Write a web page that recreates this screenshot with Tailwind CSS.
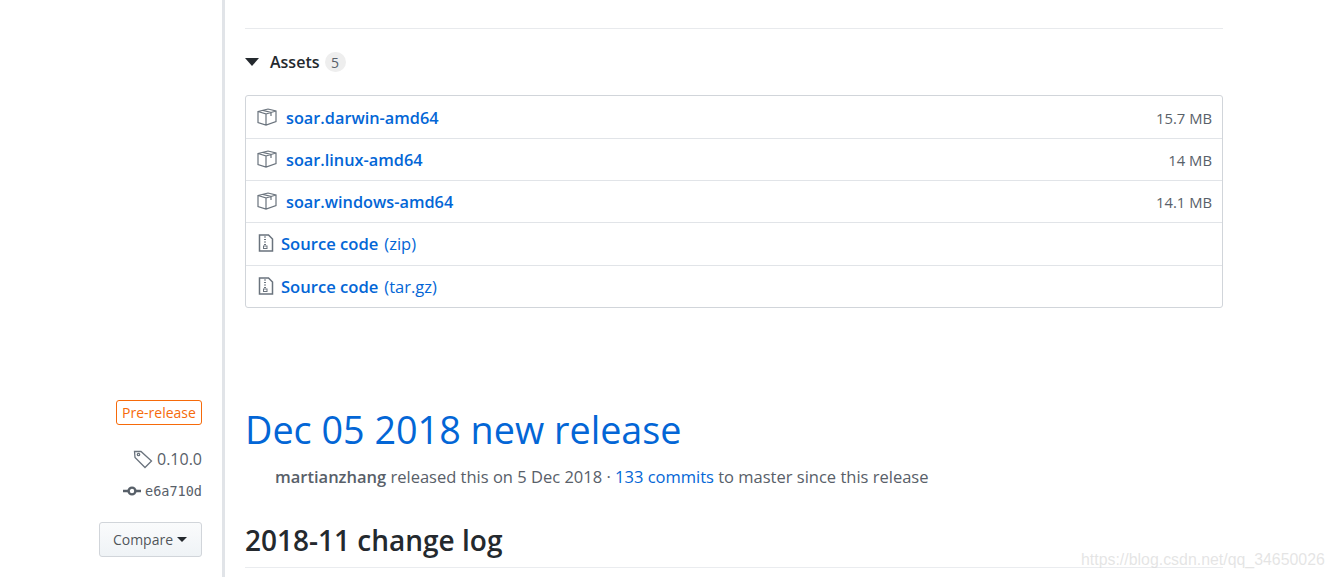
<!DOCTYPE html>
<html>
<head>
<meta charset="utf-8">
<script src="https://cdn.jsdelivr.net/npm/@tailwindcss/browser@4"></script>
</head>
<body class="bg-white">
<div class="relative flex h-[577px] w-[1334px] overflow-hidden bg-white font-['Open_Sans',sans-serif] text-[#24292e]">
  <aside class="flex h-full w-[225px] shrink-0 flex-col items-end border-r-[3px] border-[#e1e4e8] pt-[400px] pr-[20px]">
    <span class="flex h-[25px] w-[86px] items-center justify-center rounded-[3px] border border-[#f66a0a] text-[14px] text-[#f66a0a]">Pre-release</span>
    <div class="mt-[20px] flex h-[28px] items-center gap-[4px] text-[16px] text-[#586069]">
      <svg width="20" height="20" viewBox="0 0 20 20" fill="none" stroke="#6a737d" stroke-width="1.3"><path d="M1.5 2.5 H8 L18.5 12 L12 18.5 L2 8.5 Z"/><circle cx="5.5" cy="5.5" r="1.2"/></svg>
      <span>0.10.0</span>
    </div>
    <div class="mt-[8px] flex h-[20px] items-center gap-[4px] font-['DejaVu_Sans_Mono',monospace] text-[13.5px] text-[#586069]">
      <svg width="18" height="12" viewBox="0 0 18 12" fill="none" stroke="#586069" stroke-width="2.4"><circle cx="9" cy="6" r="3.4"/><path d="M0 6 H5 M13 6 H18"/></svg>
      <span>e6a710d</span>
    </div>
    <button class="mt-[21px] flex h-[35px] w-[103px] items-center justify-center gap-[4px] rounded-[3px] border border-[#d1d5da] bg-gradient-to-b from-[#fafbfc] to-[#eff3f6] pr-[1px] text-[14px] text-[#24292e]/80">
      <span>Compare</span><span class="h-0 w-0 border-x-[5px] border-t-[5px] border-x-transparent border-t-[#24292e]"></span>
    </button>
  </aside>
  <main class="ml-[20px] w-[978px] shrink-0 pt-[28px]">
    <div class="border-t border-[#e8eaed]"></div>
    <div class="mt-[20px] flex h-[26px] items-center">
      <span class="h-0 w-0 border-x-[7.5px] border-t-[8px] border-x-transparent border-t-[#24292e]"></span>
      <span class="ml-[11px] text-[16px] font-semibold">Assets</span>
      <span class="ml-[5px] flex h-[20px] w-[21px] items-center justify-center rounded-full bg-[#eeeeee] text-[14px] text-[#586069]">5</span>
    </div>
    <div class="mt-[20px] h-[213px] rounded-[3px] border border-[#d1d5da]">
      <div class="flex h-[43px] items-center justify-between border-b border-[#e1e4e8] pt-[2px] pl-[11px] pr-[10px]">
        <div class="flex items-center gap-[9px]"><svg class="mt-[-3px]" width="20" height="18" viewBox="0 0 20 18" fill="none" stroke="#6a737d" stroke-width="1.2"><path d="M1 3.5 L11 1 L19 3 V13.5 L9 17 L1 14.5 Z M1 3.5 L9 6 V17 M9 6 L19 3 M6 2.3 L14 4.5 V8"/></svg><a class="text-[16.3px] font-semibold text-[#0366d6]">soar.darwin-amd64</a></div>
        <span class="text-[14.8px] text-[#586069]">15.7 MB</span>
      </div>
      <div class="flex h-[42px] items-center justify-between border-b border-[#e1e4e8] pt-[2px] pl-[11px] pr-[10px]">
        <div class="flex items-center gap-[9px]"><svg class="mt-[-3px]" width="20" height="18" viewBox="0 0 20 18" fill="none" stroke="#6a737d" stroke-width="1.2"><path d="M1 3.5 L11 1 L19 3 V13.5 L9 17 L1 14.5 Z M1 3.5 L9 6 V17 M9 6 L19 3 M6 2.3 L14 4.5 V8"/></svg><a class="text-[16.3px] font-semibold text-[#0366d6]">soar.linux-amd64</a></div>
        <span class="text-[14.8px] text-[#586069]">14 MB</span>
      </div>
      <div class="flex h-[42px] items-center justify-between border-b border-[#e1e4e8] pt-[2px] pl-[11px] pr-[10px]">
        <div class="flex items-center gap-[9px]"><svg class="mt-[-3px]" width="20" height="18" viewBox="0 0 20 18" fill="none" stroke="#6a737d" stroke-width="1.2"><path d="M1 3.5 L11 1 L19 3 V13.5 L9 17 L1 14.5 Z M1 3.5 L9 6 V17 M9 6 L19 3 M6 2.3 L14 4.5 V8"/></svg><a class="text-[16.3px] font-semibold text-[#0366d6]">soar.windows-amd64</a></div>
        <span class="text-[14.8px] text-[#586069]">14.1 MB</span>
      </div>
      <div class="flex h-[43px] items-center border-b border-[#e1e4e8] pl-[12px]">
        <div class="flex items-center gap-[7px]"><svg class="mt-[-2px]" width="16" height="18" viewBox="0 0 16 18" fill="none" stroke="#6a737d" stroke-width="1.5"><path d="M1.5 1 H10.5 L14.5 5 V17 H1.5 Z"/><path d="M6 3 h2 M6 5.5 h2 M6 8 h2 M6 10.5 h2" stroke-width="1.1"/><rect x="5.5" y="12" width="3.5" height="2.5" stroke-width="1"/></svg><a class="text-[16.6px] font-semibold text-[#0366d6]">Source code</a><span class="ml-[-1px] text-[16.5px] text-[#0366d6]">(zip)</span></div>
      </div>
      <div class="flex h-[41px] items-center pl-[12px] pt-[1px]">
        <div class="flex items-center gap-[7px]"><svg class="mt-[-2px]" width="16" height="18" viewBox="0 0 16 18" fill="none" stroke="#6a737d" stroke-width="1.5"><path d="M1.5 1 H10.5 L14.5 5 V17 H1.5 Z"/><path d="M6 3 h2 M6 5.5 h2 M6 8 h2 M6 10.5 h2" stroke-width="1.1"/><rect x="5.5" y="12" width="3.5" height="2.5" stroke-width="1"/></svg><a class="text-[16.6px] font-semibold text-[#0366d6]">Source code</a><span class="ml-[-1px] text-[16.5px] text-[#0366d6]">(tar.gz)</span></div>
      </div>
    </div>
    <h1 class="mt-[94px] text-[37.75px] leading-[56px] font-normal text-[#0366d6]">Dec 05 2018 new release</h1>
    <p class="mt-[7px] pl-[30px] text-[16.5px] leading-[24px] text-[#586069]"><b class="font-semibold">martianzhang</b> released this on 5 Dec 2018 · <a class="text-[#0366d6]">133 commits</a> to master since this release</p>
    <h2 class="mt-[32px] border-b border-[#eaecef] pb-[8px] text-[28px] leading-[38px] font-semibold">2018-11 change log</h2>
  </main>
  <span class="absolute top-[548px] left-[1081px] font-['Liberation_Sans',sans-serif] text-[15.9px] text-[#d9d9d9]/70">https://blog.csdn.net/qq_34650026</span>
</div>
</body>
</html>
